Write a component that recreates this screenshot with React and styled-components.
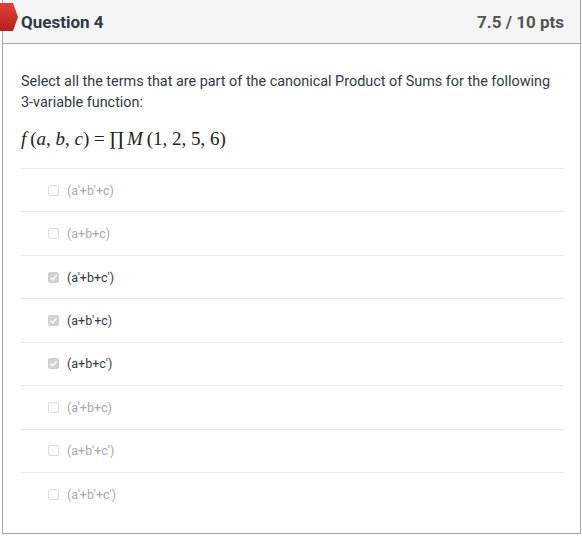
import styled, { createGlobalStyle } from "styled-components";

const GlobalStyle = createGlobalStyle`
  body {
    margin: 0;
    background: #ffffff;
    font-family: Roboto, "Liberation Sans", sans-serif;
  }
`;

const Page = styled.div`
  padding-left: 2px;
  width: 579px;
`;

const Card = styled.section`
  position: relative;
  border: 1px solid #a5a5a5;
  border-top: none;
  background: #ffffff;
  box-sizing: border-box;
  height: 534px;
`;

const Badge = styled.svg`
  position: absolute;
  left: -3px;
  top: 3px;
`;

const Header = styled.header`
  display: flex;
  justify-content: space-between;
  align-items: center;
  height: 43px;
  padding: 0 16px 0 18px;
  background: #f5f5f5;
  border-bottom: 1px solid #a5a5a5;
`;

const Title = styled.h2`
  margin: 0;
  font-size: 17px;
  font-weight: 700;
  color: #2d3b45;
`;

const Points = styled.span`
  font-size: 17px;
  font-weight: 700;
  color: #555555;
`;

const Body = styled.div`
  padding: 27px 16px 0 18px;
`;

const Prompt = styled.p`
  margin: 0;
  font-size: 14.4px;
  line-height: 21px;
  color: #2d3b45;
`;

const Formula = styled.div`
  margin: 14px 0 0;
  font-family: "Liberation Serif", "DejaVu Serif", serif;
  font-size: 19px;
  line-height: 24px;
  color: #222222;
  padding-bottom: 17px;
`;

const Var = styled.i`
  font-style: italic;
  margin-right: ${(p) => p.$gap || 0}px;
`;

const Big = styled.span`
  font-family: "DejaVu Serif", serif;
  font-size: 18px;
  margin-right: 3px;
`;

const AnswerList = styled.ul`
  list-style: none;
  margin: 0;
  padding: 0;
`;

const Answer = styled.li`
  display: flex;
  align-items: center;
  gap: 8px;
  height: 43.43px;
  box-sizing: border-box;
  padding-left: 27px;
  border-top: 1px solid #e9e9e9;
  font-size: 12.5px;
  color: ${(p) => (p.$checked ? "#2d3b45" : "#a8a8a8")};
`;

const Box = styled.span`
  display: inline-flex;
  align-items: center;
  justify-content: center;
  width: 11px;
  height: 11px;
  box-sizing: border-box;
  border-radius: 2px;
  border: 1px solid ${(p) => (p.$checked ? "#cfcfcf" : "#dedede")};
  background: ${(p) => (p.$checked ? "#d2d2d2" : "#fbfbfb")};
`;

const answers = [
  { label: "(a'+b'+c)", checked: false },
  { label: "(a+b+c)", checked: false },
  { label: "(a'+b+c')", checked: true },
  { label: "(a+b'+c)", checked: true },
  { label: "(a+b+c')", checked: true },
  { label: "(a'+b+c)", checked: false },
  { label: "(a+b'+c')", checked: false },
  { label: "(a'+b'+c')", checked: false },
];

function Check() {
  return (
    <svg width="9" height="9" viewBox="0 0 9 9">
      <path d="M1.5 4.7 L3.6 6.7 L7.6 2.2" fill="none" stroke="#ffffff" strokeWidth="1.4" />
    </svg>
  );
}

export default function App() {
  return (
    <>
      <GlobalStyle />
      <Page>
        <Card>
          <Badge width="18" height="28" viewBox="0 0 18 28">
            <defs>
              <linearGradient id="badgeFill" x1="0" y1="0" x2="0" y2="1">
                <stop offset="0" stopColor="#e0413a" />
                <stop offset="1" stopColor="#b8201b" />
              </linearGradient>
            </defs>
            <polygon points="0,0 13,0 18,14 13,28 0,28" fill="url(#badgeFill)" />
          </Badge>
          <Header>
            <Title>Question 4</Title>
            <Points>7.5 / 10 pts</Points>
          </Header>
          <Body>
            <Prompt>
              Select all the terms that are part of the canonical Product of Sums for the following
              3-variable function:
            </Prompt>
            <Formula>
              <Var $gap={4}>f</Var>(<Var>a</Var>, <Var>b</Var>, <Var>c</Var>) ={" "}
              <Big>∏</Big>
              <Var $gap={4}>M</Var>(1, 2, 5, 6)
            </Formula>
            <AnswerList>
              {answers.map((a) => (
                <Answer key={a.label} $checked={a.checked}>
                  <Box $checked={a.checked}>{a.checked && <Check />}</Box>
                  {a.label}
                </Answer>
              ))}
            </AnswerList>
          </Body>
        </Card>
      </Page>
    </>
  );
}
